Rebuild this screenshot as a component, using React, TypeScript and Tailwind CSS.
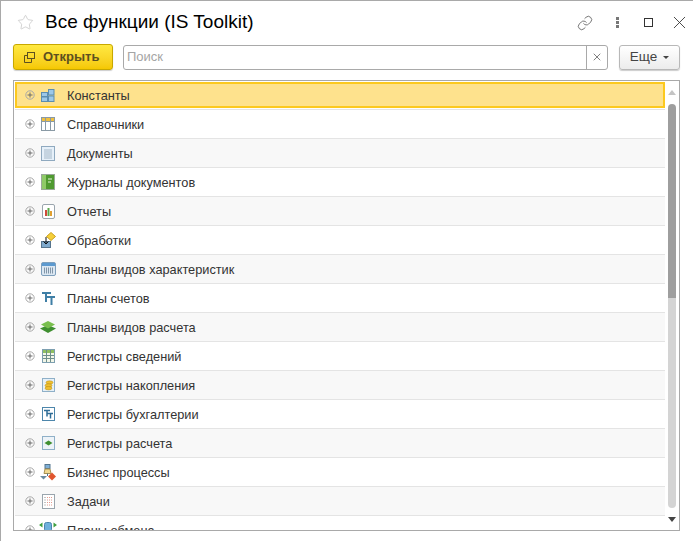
import { Star, Link, X } from 'lucide-react'

const font = "font-['Liberation_Sans',Arial,sans-serif]"

// small icons for the metadata tree, drawn by hand
function Icon({ kind }: { kind: string }) {
  switch (kind) {
    case 'const':
      return (
        <svg width="14" height="13" viewBox="0 0 14 13">
          <rect x=".5" y="3.5" width="6" height="4" fill="#9cc8e8" stroke="#5b8db0" />
          <rect x=".5" y="8" width="6" height="4.5" fill="#9cc8e8" stroke="#5b8db0" />
          <rect x="7.5" y="7" width="5.5" height="5.5" fill="#9cc8e8" stroke="#5b8db0" />
          <rect x="7.5" y=".5" width="5.5" height="5.5" fill="#9cc8e8" stroke="#5b8db0" />
        </svg>
      )
    case 'ref':
      return (
        <svg width="14" height="14" viewBox="0 0 14 14">
          <rect x=".5" y=".5" width="13" height="13" fill="#fff" stroke="#8a9aa5" />
          <rect x="1" y="1" width="12" height="3" fill="#f0c040" />
          <path d="M4.5 1v12M9.5 1v12M1 4.5h12" stroke="#8a9aa5" />
        </svg>
      )
    case 'doc':
      return (
        <svg width="14" height="15" viewBox="0 0 14 15">
          <rect x=".5" y=".5" width="13" height="14" fill="#e6f0f9" stroke="#8fa9bf" />
          <path d="M3 4h8M3 6h8M3 8h8M3 10h8M3 12h8" stroke="#a5b8c8" />
        </svg>
      )
    case 'journal':
      return (
        <svg width="14" height="16" viewBox="0 0 14 16">
          <rect x=".5" y=".5" width="13" height="15" fill="#4f9a30" stroke="#9aa89a" />
          <rect x="1" y="1" width="4" height="14" fill="#8fca68" />
          <path d="M7 5h4M7 8h3" stroke="#e8f5dd" />
        </svg>
      )
    case 'report':
      return (
        <svg width="13" height="15" viewBox="0 0 13 15">
          <rect x=".5" y=".5" width="12" height="14" rx="1.5" fill="#fff" stroke="#9aa5ad" />
          <rect x="3" y="6" width="2" height="6" fill="#d04a3a" />
          <rect x="5.5" y="4" width="2" height="8" fill="#5aa84a" />
          <rect x="8" y="7" width="2" height="5" fill="#e0a030" />
        </svg>
      )
    case 'proc':
      return (
        <svg width="16" height="16" viewBox="0 0 16 16">
          <path d="M11 .5l4.5 4-4.5 4-4.5-4z" fill="#f5cf3a" stroke="#c9a020" />
          <rect x="1.5" y="9.5" width="9" height="6" fill="#7fa9cc" stroke="#56748d" />
          <path d="M6 5v7M3.5 9.5l2.5 2.5 2.5-2.5" fill="none" stroke="#111" />
        </svg>
      )
    case 'chars':
      return (
        <svg width="15" height="14" viewBox="0 0 15 14">
          <rect x=".5" y=".5" width="14" height="13" rx="1.5" fill="#dbe7f2" stroke="#7d9fbc" />
          <rect x="1" y="1" width="13" height="3" fill="#5c9ad0" />
          <path d="M3.5 5.5v6M5.5 5.5v6M7.5 5.5v6M9.5 5.5v6M11.5 5.5v6" stroke="#8296a8" />
        </svg>
      )
    case 'accounts':
      return (
        <svg width="13" height="13" viewBox="0 0 13 13">
          <path d="M0 1h9M4 1v9M5 5h8M9.5 5v8" fill="none" stroke="#3f7fa6" strokeWidth="2" />
        </svg>
      )
    case 'calc':
      return (
        <svg width="16" height="12" viewBox="0 0 16 12">
          <path d="M8 4l8 3.5L8 12 0 7.5z" fill="#3f8f30" />
          <path d="M8 0l7 3.5L8 7.5 1 3.5z" fill="#79bf4e" />
        </svg>
      )
    case 'info':
      return (
        <svg width="13" height="14" viewBox="0 0 13 14">
          <rect x=".5" y=".5" width="12" height="13" fill="#f2f6e8" stroke="#7d9fb0" />
          <rect x="1" y="1" width="11" height="3" fill="#8fbf60" />
          <path d="M1 6.5h11M1 9.5h11M4.5 1v12M8.5 1v12" stroke="#6f8f8a" />
        </svg>
      )
    case 'accum':
      return (
        <svg width="13" height="14" viewBox="0 0 13 14">
          <rect x=".5" y=".5" width="12" height="13" fill="#e6f0f8" stroke="#8fb0c8" />
          <ellipse cx="7.5" cy="4.5" rx="3.5" ry="1.7" fill="#f0c030" stroke="#b58a10" strokeWidth=".5" />
          <ellipse cx="6.5" cy="7.5" rx="3.5" ry="1.7" fill="#f0c030" stroke="#b58a10" strokeWidth=".5" />
          <ellipse cx="6.5" cy="10.2" rx="3.5" ry="1.7" fill="#f0c030" stroke="#b58a10" strokeWidth=".5" />
        </svg>
      )
    case 'book':
      return (
        <svg width="13" height="14" viewBox="0 0 13 14">
          <rect x=".5" y=".5" width="12" height="13" fill="#fff" stroke="#4d86ab" />
          <path d="M2 3.5h6M5 3.5v6M5.5 6.5h5.5M8.5 6.5v5" fill="none" stroke="#2f6d96" strokeWidth="1.5" />
        </svg>
      )
    case 'rcalc':
      return (
        <svg width="13" height="14" viewBox="0 0 13 14">
          <rect x=".5" y=".5" width="12" height="13" fill="#edf3f8" stroke="#8fb0c8" />
          <path d="M6.5 4.5l4 2.5-4 2.5-4-2.5z" fill="#3f8f30" />
        </svg>
      )
    case 'bp':
      return (
        <svg width="16" height="17" viewBox="0 0 16 17">
          <rect x="5" y=".5" width="5" height="4" fill="#7fb0d8" stroke="#55768f" />
          <path d="M5 5h5l1 4.5H4z" fill="#f0d890" stroke="#a89050" />
          <path d="M7.5 9.5V12" stroke="#55768f" />
          <path d="M0 12h7l-3.5 3.5z" fill="#6a8aa0" />
          <path d="M12 8.5l4 4-4 4-4-4z" fill="#e0562e" />
        </svg>
      )
    case 'task':
      return (
        <svg width="13" height="15" viewBox="0 0 13 15">
          <rect x=".5" y=".5" width="12" height="14" fill="#fff" stroke="#9aa5ad" />
          <path d="M2.5 3.5h1M2.5 6h1M2.5 8.5h1M2.5 11h1" stroke="#8a8a8a" />
          <path d="M5 3.5h5.5M5 6h5.5M5 8.5h5.5M5 11h5.5" stroke="#e39a8e" strokeDasharray="1 1" />
        </svg>
      )
    case 'exchange':
      return (
        <svg width="18" height="16" viewBox="0 0 18 16">
          <path d="M0 3l3.5-2.5v5zM18 3l-3.500-2.500v5z" fill="#3fa040" />
          <rect x="5.5" y=".5" width="7" height="9" rx="2" fill="#6fb0dc" stroke="#4a84ad" />
          <path d="M9 9v3M3 13h12" stroke="#4a84ad" strokeWidth="1.5" />
        </svg>
      )
    default:
      return null
  }
}

function Row({ label, kind, alt, active }: { label: string; kind: string; alt?: boolean; active?: boolean }) {
  const content = (
    <>
      {/* expand marker */}
      <svg width="10" height="10" viewBox="0 0 10 10" className="shrink-0">
        <circle cx="5" cy="5" r="4.2" fill="none" stroke="#a8a8a8" />
        <path d="M2.5 5h5M5 2.5v5" stroke="#6a6a6a" />
      </svg>
      <span className="ml-[4px] flex w-[18px] shrink-0 justify-center">
        <Icon kind={kind} />
      </span>
      <span className="ml-[10px] mt-[1px] text-[12.75px] text-[#333]">{label}</span>
    </>
  )
  if (active) {
    return (
      <div className="h-[29px] shrink-0 border-b border-[#e4e4e4] bg-white py-[1px]">
        <div className="flex h-[26px] items-center border-2 border-[#fcc91f] bg-[#fee28d] pl-[8px]">{content}</div>
      </div>
    )
  }
  return (
    <div className={`flex h-[29px] shrink-0 items-center border-b border-[#e4e4e4] pl-[10px] ${alt ? 'bg-[#f8f8f8]' : 'bg-white'}`}>
      {content}
    </div>
  )
}

const rows = [
  ['Справочники', 'ref'],
  ['Документы', 'doc'],
  ['Журналы документов', 'journal'],
  ['Отчеты', 'report'],
  ['Обработки', 'proc'],
  ['Планы видов характеристик', 'chars'],
  ['Планы счетов', 'accounts'],
  ['Планы видов расчета', 'calc'],
  ['Регистры сведений', 'info'],
  ['Регистры накопления', 'accum'],
  ['Регистры бухгалтерии', 'book'],
  ['Регистры расчета', 'rcalc'],
  ['Бизнес процессы', 'bp'],
  ['Задачи', 'task'],
  ['Планы обмена', 'exchange'],
]

export default function App() {
  return (
    <div className={`${font} flex h-[541px] w-[693px] flex-col overflow-hidden border-t border-l border-[#a9a9a9] bg-white`}>
      {/* Title */}
      <div className="flex h-[43px] shrink-0 items-center pl-[16px] pr-[3px]">
        <Star size={17} strokeWidth={1} className="text-[#c0c0c0]" />
        <span className="ml-[11px] text-[19px] text-black">Все функции (IS Toolkit)</span>
        <div className="ml-auto flex items-center">
          <Link size={16} strokeWidth={1.2} className="text-[#555]" />
          <span className="ml-[23px] flex flex-col gap-[1px]">
            <span className="h-[3px] w-[3px] bg-[#777]" />
            <span className="h-[3px] w-[3px] bg-[#777]" />
            <span className="h-[3px] w-[3px] bg-[#777]" />
          </span>
          <span className="ml-[25px] h-[9px] w-[9px] border border-[#333]" />
          <X size={21} strokeWidth={1} className="ml-[16px] text-[#333]" />
        </div>
      </div>

      {/* Toolbar */}
      <div className="flex h-[26px] shrink-0 items-center pl-[12px]">
        <button className="flex h-[26px] w-[100px] items-center rounded-[3px] border border-[#c8a800] bg-gradient-to-b from-[#ffe940] to-[#f5c800] pl-[10px] text-[13px] font-bold text-[#5c5020] shadow-[0_1px_1px_rgba(0,0,0,0.2)]">
          <svg width="11" height="11" viewBox="0 0 11 11" fill="none" stroke="#5c5020">
            <rect x="3.5" y=".5" width="7" height="6" />
            <path d="M3 3.5H.5v7h7V7" />
          </svg>
          <span className="ml-[8px]">Открыть</span>
        </button>
        <div className="ml-[10px] flex h-[25px] w-[485px] items-center rounded-[3px] border border-[#a9a9a9]">
          <span className="flex-1 pl-[3px] text-[13px] text-[#a5a5a5]">Поиск</span>
          <span className="flex h-full w-[21px] items-center justify-center border-l border-[#a9a9a9]">
            <X size={12} strokeWidth={1.5} className="text-[#555]" />
          </span>
        </div>
        <button className="ml-[11px] flex h-[25px] w-[61px] items-center justify-center rounded-[3px] border border-[#b8b8b8] bg-gradient-to-b from-white to-[#ececec] text-[13.5px] text-[#444] shadow-[0_1px_1px_rgba(0,0,0,0.2)]">
          Еще
          <span className="ml-[6px] mt-[1px] h-0 w-0 border-x-[3.5px] border-t-[3.5px] border-x-transparent border-t-[#444]" />
        </button>
      </div>

      {/* Tree */}
      <div className="ml-[12px] mt-[10px] mb-[10px] flex min-h-0 w-[667px] flex-1 border border-[#a9a9a9]">
        <div className="flex min-w-0 flex-1 flex-col overflow-hidden pl-[1px]">
          <Row label="Константы" kind="const" active />
          {rows.map(([label, kind], i) => (
            <Row key={label} label={label} kind={kind} alt={i % 2 === 1} />
          ))}
        </div>
        <div className="flex w-[14px] shrink-0 flex-col items-center">
          <span className="mt-[9px] h-0 w-0 border-x-[4px] border-b-[5px] border-x-transparent border-b-[#c4c4c4]" />
          <div className="mt-[9px] h-[404px] w-[8px] rounded-[4px] bg-gradient-to-b from-[#9e9e9e] from-48% to-[#d4d4d4] to-48%" />
          <span className="mt-[9px] h-0 w-0 border-x-[4px] border-t-[5px] border-x-transparent border-t-[#444]" />
        </div>
      </div>
    </div>
  )
}
